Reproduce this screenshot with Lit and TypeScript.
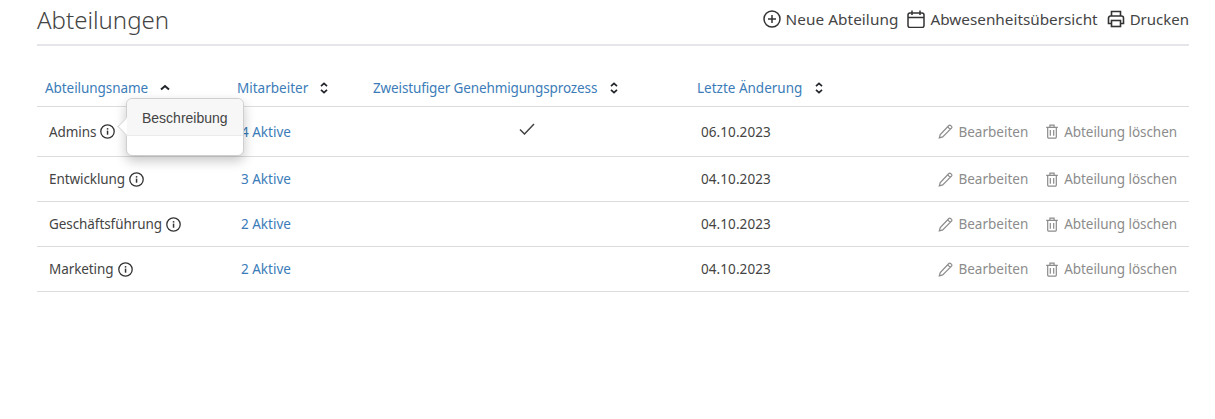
import { LitElement, html, css, svg } from "lit";
import { customElement } from "lit/decorators.js";

const sortBoth = html`<svg class="sort" width="8" height="12" viewBox="0 0 8 12"><path d="M1 4.2 4 1.4 7 4.2M1 7.8 4 10.6 7 7.8" fill="none" stroke="#212529" stroke-width="1.7"/></svg>`;
const sortUp = html`<svg class="sort" width="10" height="12" viewBox="0 0 10 12"><path d="M1 7.6 5 4 9 7.6" fill="none" stroke="#212529" stroke-width="2"/></svg>`;
const info = html`<svg class="ico" width="15" height="15" viewBox="0 0 15 15"><circle cx="7.5" cy="7.5" r="6.7" fill="none" stroke="#333" stroke-width="1.3"/><rect x="6.8" y="6.6" width="1.5" height="4.100" fill="#333"/><rect x="6.800" y="4.100" width="1.500" height="1.500" fill="#333"/></svg>`;
const pencil = html`<svg width="15" height="15" viewBox="0 0 16 16"><path d="M11.6 1.6a1.3 1.3 0 0 1 1.9 0l.9.9a1.3 1.3 0 0 1 0 1.9L5 13.800l-3.600 1 1-3.600zM10.300 3l2.800 2.800" fill="none" stroke="#8c8c8c" stroke-width="1.300"/></svg>`;
const trash = html`<svg width="14" height="15" viewBox="0 0 14 16"><path d="M.8 3.500h12.400M4.800 3.300V1.300h4.400v2M2.400 3.500v10.400a1.200 1.200 0 0 0 1.200 1.200h6.800a1.200 1.200 0 0 0 1.200-1.200V3.500M5.200 6.300v6.300M8.800 6.300v6.300" fill="none" stroke="#8c8c8c" stroke-width="1.300"/></svg>`;
const plus = svg`<circle cx="9" cy="9" r="8" fill="none" stroke="#333" stroke-width="1.500"/><path d="M9 5v8M5 9h8" stroke="#333" stroke-width="1.500"/>`;
const cal = svg`<rect x="1" y="3" width="16" height="14.500" rx="2" fill="none" stroke="#333" stroke-width="1.500"/><path d="M1 7.500h16M5 .5v4.500M13 .5v4.500" stroke="#333" stroke-width="1.500" fill="none"/>`;
const print = svg`<path d="M4.500 6V1.500h9V6M4.500 13.500H1.500V8a2 2 0 0 1 2-2h11a2 2 0 0 1 2 2v5.500h-3" fill="none" stroke="#333" stroke-width="1.600"/><rect x="4.500" y="10.500" width="9" height="6" fill="none" stroke="#333" stroke-width="1.600"/>`;

const rows = [
  { name: "Admins", n: "4 Aktive", check: true, date: "06.10.2023" },
  { name: "Entwicklung", n: "3 Aktive", check: false, date: "04.10.2023" },
  { name: "Geschäftsführung", n: "2 Aktive", check: false, date: "04.10.2023" },
  { name: "Marketing", n: "2 Aktive", check: false, date: "04.10.2023" },
];

@customElement("app-root")
export class AppRoot extends LitElement {
  static styles = css`
    :host { display: block; font-family: "Noto Sans", sans-serif; color: #444; font-size: 13.5px; background: #fff; min-height: 419px; }
    .page { padding: 0 26px 0 37px; }
    .head { display: flex; justify-content: space-between; align-items: center; height: 44px; border-bottom: 2px solid #e6e6ea; }
    h1 { margin: 0; font-weight: 300; font-size: 24px; line-height: 40px; color: #444; position: relative; top: -2px; }
    .actions { display: flex; gap: 9px; position: relative; top: -3px; }
    .act { display: flex; align-items: center; gap: 5px; font-size: 15.3px; color: #444; }
    .act.wide { letter-spacing: 0.07px; }
    .act.last { font-size: 15px; }
    .table { margin-top: 24px; }
    .row { display: grid; grid-template-columns: 192px 136px 324px 1fr auto; border-bottom: 1px solid #dcdcde; align-items: center; }
    .hrow { height: 36px; color: #3b7cb8; }
    .hrow > div { padding-left: 8px; display: flex; align-items: center; gap: 12px; }
    .hrow .sort { flex: none; }
    .hrow .gap13 { gap: 13px; }
    .tight { letter-spacing: -0.13px; }
    .tight-a { letter-spacing: -0.07px; }
    .brow { height: 44px; }
    .brow.first { height: 49px; }
    .brow > div { padding-left: 12px; }
    .name { display: flex; align-items: center; gap: 4px; }
    .nm { letter-spacing: -0.08px; }
    .count { color: #3b7cb8; }
    .chk { padding: 0 !important; }
    .chk svg { display: block; margin: -6px 0 0 154px; }
    .date { letter-spacing: 0.08px; }
    .ops { display: flex; gap: 17px; color: #8c8c8c; padding: 0 12px 0 0 !important; }
    .op { display: flex; align-items: center; gap: 5px; }
    .op.del { letter-spacing: -0.06px; }
    .wrap { position: relative; }
    .pop { position: absolute; left: 89px; top: -25px; width: 116px; height: 56px; background: #fff; border: 1px solid #cfcfcf; border-radius: 6px; box-shadow: 0 5px 12px rgba(0,0,0,.22); font-family: "Liberation Sans", sans-serif; font-size: 14px; z-index: 2; }
    .pop-h { position: relative; height: 37px; box-sizing: border-box; background: #f7f7f7; border-bottom: 1px solid #ebebeb; border-radius: 6px 6px 0 0; padding: 11px 0 0 15px; line-height: 17px; color: #444; }
    .arrow { position: absolute; left: -7px; top: 21px; width: 13px; height: 13px; transform: rotate(45deg); background: #fff; border-left: 1px solid #d8d8d8; border-bottom: 1px solid #d8d8d8; box-sizing: border-box; }
  `;
  render() {
    return html`<div class="page">
      <div class="head">
        <h1>Abteilungen</h1>
        <div class="actions">
          <div class="act wide"><svg width="18" height="18" viewBox="0 0 18 18">${plus}</svg>Neue Abteilung</div>
          <div class="act"><svg width="18" height="18" viewBox="0 0 18 18">${cal}</svg>Abwesenheitsübersicht</div>
          <div class="act last"><svg width="18" height="18" viewBox="0 0 18 18">${print}</svg>Drucken</div>
        </div>
      </div>
      <div class="table">
        <div class="row hrow">
          <div><span class="tight-a">Abteilungsname</span>${sortUp}</div>
          <div>Mitarbeiter ${sortBoth}</div>
          <div class="gap13"><span class="tight">Zweistufiger Genehmigungsprozess</span>${sortBoth}</div>
          <div class="gap13">Letzte Änderung ${sortBoth}</div>
          <div></div>
        </div>
        ${rows.map((r, i) => html`<div class="row brow ${i === 0 ? "first" : ""}">
          <div class="name wrap"><span class="nm">${r.name}</span> ${info}
            ${i === 0 ? html`<div class="pop"><span class="arrow"></span><div class="pop-h">Beschreibung</div></div>` : ""}
          </div>
          <div class="count">${r.n}</div>
          <div class="chk">${r.check ? html`<svg width="16" height="12" viewBox="0 0 16 12"><path d="M1 6.500 5.500 11 15 1" fill="none" stroke="#444" stroke-width="1.500"/></svg>` : ""}</div>
          <div class="date">${r.date}</div>
          <div class="ops"><span class="op">${pencil}Bearbeiten</span><span class="op del">${trash}Abteilung löschen</span></div>
        </div>`)}
      </div>
    </div>`;
  }
}
